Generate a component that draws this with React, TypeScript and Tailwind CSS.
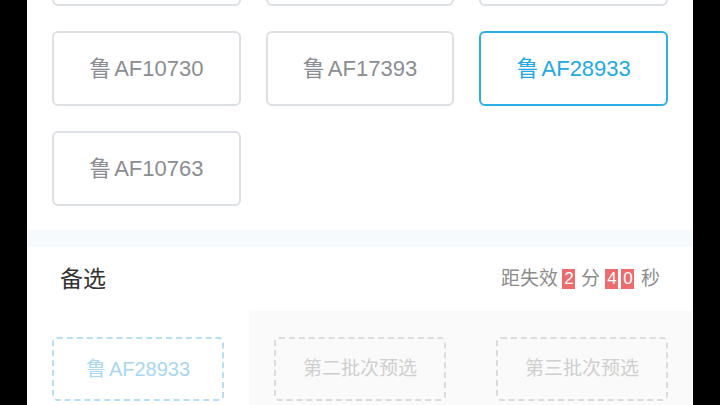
const plates = ["AF10730", "AF17393", "AF28933", "AF10763"];

function Plate({ no, active }: { no?: string; active?: boolean }) {
  return (
    <div
      className={`flex h-[75px] items-center justify-center rounded-[6px] border-2 text-[22px] ${
        active ? "border-[#2eaee6] text-[#22a8e2]" : "border-[#dcdfe3] text-[#8a8d92]"
      }`}
    >
      {no && (
        <>
          <span className="mr-[3px]">鲁</span>
          <span>{no}</span>
        </>
      )}
    </div>
  );
}

function Digit({ d }: { d: string }) {
  return (
    <span className="mx-[1.5px] inline-flex h-[20px] w-[13px] items-center justify-center bg-[#ec6b6c] text-[17px] text-white">
      {d}
    </span>
  );
}

export default function App() {
  return (
    <div
      className="flex h-[405px] w-[720px] justify-center overflow-hidden bg-black"
      style={{ fontFamily: '"Liberation Sans", "Noto Sans CJK SC", sans-serif' }}
    >
      <div className="flex w-[666px] flex-col bg-white">
        <div className="-mt-[69px] grid grid-cols-3 gap-x-[25px] gap-y-[25px] px-[25px] pb-[24px]">
          {/* first row is scrolled off the top, only its bottom edge shows */}
          <Plate />
          <Plate />
          <Plate />
          {plates.map((p, i) => (
            <Plate key={p} no={p} active={i === 2} />
          ))}
        </div>
        <div className="h-[17px] bg-[#f6fafd]" />
        <div className="flex h-[64px] items-center justify-between pl-[33px] pr-[33px]">
          <span className="text-[23px] text-[#333]">备选</span>
          <span className="flex items-center text-[19px] text-[#8c8c8c]">
            <span className="mr-[3px]">距失效</span>
            <Digit d="2" />
            <span className="mx-[4px]">分</span>
            <Digit d="4" />
            <Digit d="0" />
            <span className="ml-[5px]">秒</span>
          </span>
        </div>
        <div className="grid flex-1 grid-cols-3">
          <div className="bg-white px-[25px] pt-[26px]">
            <div className="flex h-[64px] items-center justify-center rounded-[5px] border-2 border-dashed border-[#b9dff3] text-[20px] text-[#a9d7f1]">
              <span className="mr-[3px]">鲁</span>AF28933
            </div>
          </div>
          <div className="bg-[#fafafa] px-[25px] pt-[26px]">
            <div className="flex h-[64px] items-center justify-center rounded-[5px] border-2 border-dashed border-[#dcdcdc] text-[19px] text-[#cfcfcf]">
              第二批次预选
            </div>
          </div>
          <div className="bg-[#fafafa] px-[25px] pt-[26px]">
            <div className="flex h-[64px] items-center justify-center rounded-[5px] border-2 border-dashed border-[#dcdcdc] text-[19px] text-[#cfcfcf]">
              第三批次预选
            </div>
          </div>
        </div>
      </div>
    </div>
  );
}
